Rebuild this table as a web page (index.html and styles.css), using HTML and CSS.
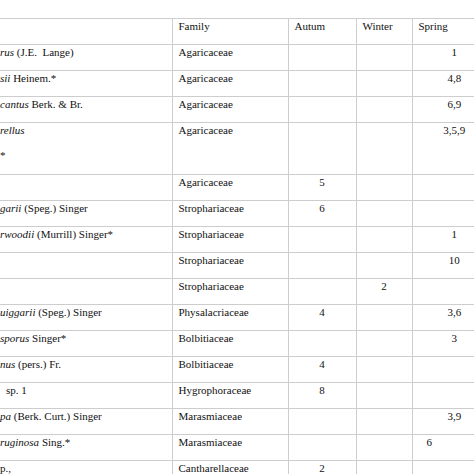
FILE: index.html
```html
<!DOCTYPE html>
<html lang="en">
<head>
<meta charset="utf-8">
<title>Species by season</title>
<link rel="stylesheet" href="styles.css">
</head>
<body>
<div class="page">
  <table class="species">
    <colgroup>
      <col class="c-name">
      <col class="c-family">
      <col class="c-autum">
      <col class="c-winter">
      <col class="c-spring">
    </colgroup>
    <thead>
      <tr>
        <th></th>
        <th>Family</th>
        <th>Autum</th>
        <th>Winter</th>
        <th>Spring</th>
      </tr>
    </thead>
    <tbody>
      <tr><td><i>rus</i> (J.E.&nbsp; Lange)</td><td>Agaricaceae</td><td class="num"></td><td class="num"></td><td class="num">1</td></tr>
      <tr><td><i>sii</i> Heinem.*</td><td>Agaricaceae</td><td class="num"></td><td class="num"></td><td class="num">4,8</td></tr>
      <tr><td><i>cantus</i> Berk. &amp; Br.</td><td>Agaricaceae</td><td class="num"></td><td class="num"></td><td class="num">6,9</td></tr>
      <tr class="tall"><td><i>rellus</i><span class="second">*</span></td><td>Agaricaceae</td><td class="num"></td><td class="num"></td><td class="num">3,5,9</td></tr>
      <tr><td></td><td>Agaricaceae</td><td class="num">5</td><td class="num"></td><td class="num"></td></tr>
      <tr><td><i>garii</i> (Speg.) Singer</td><td>Strophariaceae</td><td class="num">6</td><td class="num"></td><td class="num"></td></tr>
      <tr><td><i>rwoodii</i> (Murrill) Singer*</td><td>Strophariaceae</td><td class="num"></td><td class="num"></td><td class="num">1</td></tr>
      <tr><td></td><td>Strophariaceae</td><td class="num"></td><td class="num"></td><td class="num">10</td></tr>
      <tr><td></td><td>Strophariaceae</td><td class="num"></td><td class="num">2</td><td class="num"></td></tr>
      <tr><td><i>uiggarii</i> (Speg.) Singer</td><td>Physalacriaceae</td><td class="num">4</td><td class="num"></td><td class="num">3,6</td></tr>
      <tr><td><i>sporus</i> Singer*</td><td>Bolbitiaceae</td><td class="num"></td><td class="num"></td><td class="num">3</td></tr>
      <tr><td><i>nus</i> (pers.) Fr.</td><td>Bolbitiaceae</td><td class="num">4</td><td class="num"></td><td class="num"></td></tr>
      <tr><td><span class="indent">sp. 1</span></td><td>Hygrophoraceae</td><td class="num">8</td><td class="num"></td><td class="num"></td></tr>
      <tr><td><i>pa</i> (Berk. Curt.) Singer</td><td>Marasmiaceae</td><td class="num"></td><td class="num"></td><td class="num">3,9</td></tr>
      <tr><td><i>ruginosa</i> Sing.*</td><td>Marasmiaceae</td><td class="num"></td><td class="num"></td><td class="num left">6</td></tr>
      <tr><td>p.,</td><td>Cantharellaceae</td><td class="num">2</td><td class="num"></td><td class="num"></td></tr>
    </tbody>
  </table>
</div>
</body>
</html>
```

FILE: styles.css
```css
html, body {
  margin: 0;
  padding: 0;
  background: #ffffff;
  overflow: hidden;
}

.page {
  padding-top: 18px;
  width: 474px;
  overflow: hidden;
}

.species {
  border-collapse: collapse;
  table-layout: fixed;
  width: 496px;
  font-family: "Liberation Serif", "Times New Roman", serif;
  font-size: 11px;
  color: #111111;
}

.c-name { width: 172px; }
.c-family { width: 116px; }
.c-autum { width: 68px; }
.c-winter { width: 56px; }
.c-spring { width: 84px; }

.species tr {
  height: 26px;
}

.species tr.tall {
  height: 52px;
}

.species th,
.species td {
  border: 1px solid #cdcdcd;
  padding: 1px 6px 0 6px;
  vertical-align: top;
  text-align: left;
  font-weight: normal;
  white-space: nowrap;
  overflow: hidden;
}

.species th:first-child,
.species td:first-child {
  border-left: none;
  padding-left: 0;
}

.species th:last-child,
.species td:last-child {
  border-right: none;
}

.species td.num {
  text-align: center;
}

.species td.num.left {
  text-align: left;
  padding-left: 14px;
}

.second {
  display: block;
  margin-top: 13px;
}

.indent {
  padding-left: 6px;
}
```
